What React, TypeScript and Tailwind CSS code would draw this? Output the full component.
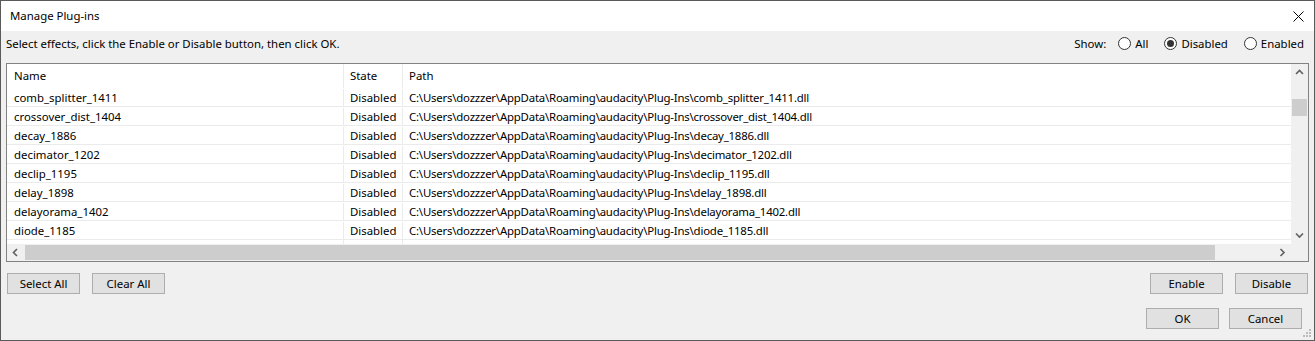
import React from 'react';

const BASE = 'C:\\Users\\dozzzer\\AppData\\Roaming\\audacity\\Plug-Ins\\';

const plugins = [
  'comb_splitter_1411',
  'crossover_dist_1404',
  'decay_1886',
  'decimator_1202',
  'declip_1195',
  'delay_1898',
  'delayorama_1402',
  'diode_1185',
];

const Radio: React.FC<{ label: string; checked?: boolean }> = ({ label, checked }) => (
  <label className="flex items-center gap-[4px]">
    <span className="w-[13px] h-[13px] rounded-full border border-[#333333] bg-white flex items-center justify-center">
      {checked && <span className="w-[7px] h-[7px] rounded-full bg-[#333333]" />}
    </span>
    <span>{label}</span>
  </label>
);

const Button: React.FC<{ children: React.ReactNode }> = ({ children }) => (
  <button className="w-[73px] h-[21px] border border-[#adadad] bg-[#e1e1e1] text-black flex items-center justify-center leading-none">
    {children}
  </button>
);

const Chevron: React.FC<{ dir: 'up' | 'down' | 'left' | 'right' }> = ({ dir }) => {
  const pts = {
    up: '1,5 4.5,1.5 8,5',
    down: '1,1.5 4.5,5 8,1.5',
    left: '5,1 1.5,4.5 5,8',
    right: '1.5,1 5,4.5 1.5,8',
  }[dir];
  const vertical = dir === 'up' || dir === 'down';
  return (
    <svg width={vertical ? 9 : 7} height={vertical ? 7 : 9} viewBox={vertical ? '0 0 9 7' : '0 0 7 9'}>
      <polyline points={pts} fill="none" stroke="#606060" strokeWidth="1.6" />
    </svg>
  );
};

const App: React.FC = () => {
  return (
    <div
      className="w-[1315px] h-[341px] border border-[#5a5a5a] bg-[#f0f0f0] flex flex-col text-[11.4px] text-black overflow-hidden"
      style={{ fontFamily: '"Noto Sans", "Open Sans", sans-serif' }}
    >
      {/* title bar */}
      <div className="h-[30px] shrink-0 bg-white flex items-center justify-between pl-[9px] pr-[9px]">
        <span>Manage Plug-ins</span>
        <svg width="11" height="11" viewBox="0 0 11 11" className="mr-[1px]">
          <path d="M0.5 0.5 L10.5 10.5 M10.5 0.5 L0.5 10.5" stroke="#000" strokeWidth="1" />
        </svg>
      </div>

      <div className="flex-1 px-[5px] flex flex-col relative">
        {/* toolbar */}
        <div className="h-[26px] flex items-center justify-between pr-[5px]">
          <span>Select effects, click the Enable or Disable button, then click OK.</span>
          <div className="flex items-center">
            <span className="mr-[12px]">Show:</span>
            <div className="flex items-center gap-[16px]">
              <Radio label="All" />
              <Radio label="Disabled" checked />
              <Radio label="Enabled" />
            </div>
          </div>
        </div>

        {/* list */}
        <div className="mt-[6px] h-[199px] border border-[#828282] bg-white flex flex-col">
          <div className="flex-1 flex min-h-0">
            <div className="flex-1 overflow-hidden">
              <div className="flex h-[24px] items-center">
                <div className="w-[337px] h-full pl-[7px] flex items-center border-r border-[#ebebeb]">Name</div>
                <div className="w-[59px] h-full pl-[6px] flex items-center border-r border-[#ebebeb]">State</div>
                <div className="flex-1 h-full pl-[6px] flex items-center">Path</div>
              </div>
              {plugins.map((p) => (
                <div key={p} className="flex h-[19px] border-b border-[#ebebeb] pt-[1px]">
                  <div className="w-[337px] pl-[7px] flex items-center border-r border-[#ebebeb] whitespace-nowrap">{p}</div>
                  <div className="w-[59px] pl-[6px] flex items-center border-r border-[#ebebeb] whitespace-nowrap">Disabled</div>
                  <div className="flex-1 pl-[6px] flex items-center whitespace-nowrap tracking-[-0.2px]">{BASE + p + '.dll'}</div>
                </div>
              ))}
              <div className="flex h-[19px]">
                <div className="w-[337px] border-r border-[#ebebeb]" />
                <div className="w-[59px] border-r border-[#ebebeb]" />
              </div>
            </div>
            <div className="w-[17px] bg-[#f0f0f0] flex flex-col">
              <div className="h-[17px] flex items-center justify-center">
                <Chevron dir="up" />
              </div>
              <div className="mt-[18px] h-[17px] mx-[1px] bg-[#cdcdcd]" />
              <div className="flex-1" />
              <div className="h-[17px] flex items-center justify-center">
                <Chevron dir="down" />
              </div>
            </div>
          </div>
          <div className="h-[17px] flex bg-[#f0f0f0]">
            <div className="flex-1 flex items-center">
              <div className="w-[17px] h-full flex items-center justify-center">
                <Chevron dir="left" />
              </div>
              <div className="ml-[1px] w-[1190px] h-[15px] bg-[#cdcdcd]" />
              <div className="flex-1" />
              <div className="w-[17px] h-full flex items-center justify-center">
                <Chevron dir="right" />
              </div>
            </div>
            <div className="w-[17px]" />
          </div>
        </div>

        {/* select / enable buttons */}
        <div className="mt-[11px] flex items-center justify-between px-[1px]">
          <div className="flex gap-[12px]">
            <Button>Select All</Button>
            <Button>Clear All</Button>
          </div>
          <div className="flex gap-[12px]">
            <Button>Enable</Button>
            <Button>Disable</Button>
          </div>
        </div>

        {/* ok / cancel */}
        <div className="mt-[14px] flex justify-end gap-[10px] pr-[7px]">
          <Button>OK</Button>
          <Button>Cancel</Button>
        </div>

        {/* resize grip */}
        <svg width="9" height="9" viewBox="0 0 9 9" className="absolute right-[3px] bottom-[3px]">
          <rect x="7" y="1" width="2" height="2" fill="#bcbcbc" />
          <rect x="4" y="4" width="2" height="2" fill="#bcbcbc" />
          <rect x="7" y="4" width="2" height="2" fill="#bcbcbc" />
          <rect x="1" y="7" width="2" height="2" fill="#bcbcbc" />
          <rect x="4" y="7" width="2" height="2" fill="#bcbcbc" />
          <rect x="7" y="7" width="2" height="2" fill="#bcbcbc" />
        </svg>
      </div>
    </div>
  );
};

export default App;
